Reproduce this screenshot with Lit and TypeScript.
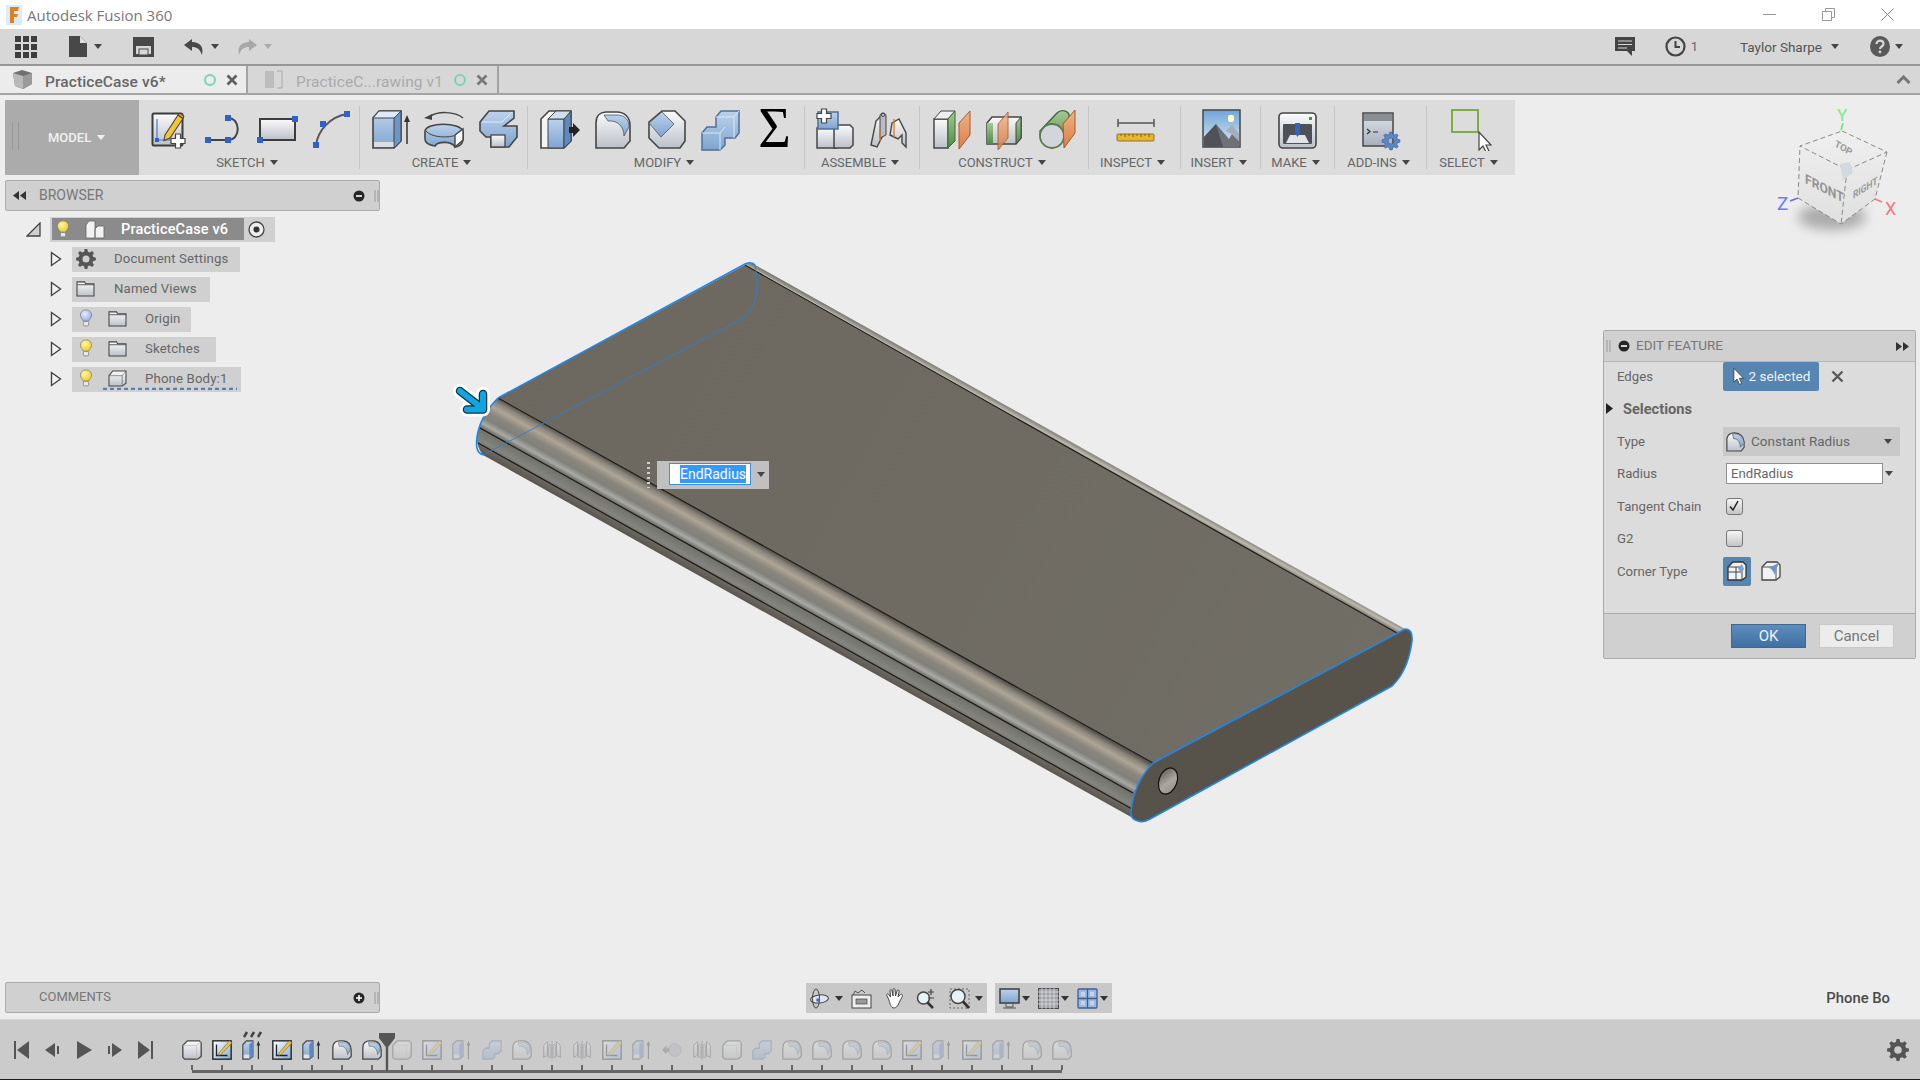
import { LitElement, html, css, svg } from "lit";
import { customElement } from "lit/decorators.js";

const S = "#454545";
const node = (x: number, y: number) => svg`<rect x=${x - 3} y=${y - 3} width="6" height="6" fill="#2f62c8"/>`;
const plusMark = (x: number, y: number) => svg`<path d="M${x - 2.5} ${y - 7}h5v4.5h4.5v5h-4.5v4.5h-5v-4.5h-4.5v-5h4.5z" fill="#fff" stroke="#444" stroke-width="1.2"/>`;

function gearPath(cx: number, cy: number, r: number, hole: number, teeth = 8) {
  let d = "";
  const step = (Math.PI * 2) / teeth;
  for (let i = 0; i < teeth; i++) {
    const a = i * step;
    const pts = [[a - step * 0.32, r * 0.76], [a - step * 0.17, r], [a + step * 0.17, r], [a + step * 0.32, r * 0.76]];
    for (const [t, rr] of pts) {
      d += `${d ? "L" : "M"}${(cx + Math.cos(t) * rr).toFixed(2)} ${(cy + Math.sin(t) * rr).toFixed(2)}`;
    }
  }
  d += `ZM${cx + hole} ${cy}a${hole} ${hole} 0 1 0 ${-2 * hole} 0a${hole} ${hole} 0 1 0 ${2 * hole} 0Z`;
  return d;
}

const tool: Record<string, any> = {
  sketchNew: svg`<rect x="5.5" y="6.5" width="30" height="32" rx="1.5" fill="url(#gWhite)" stroke="#3c3c3c" stroke-width="2"/>
    <path d="M10 12V33H28" stroke="#4d79c7" fill="none" stroke-width="1.2"/><rect x="8" y="31" width="4" height="4" fill="#2f62c8"/>
    <path d="M18 28L31 8l5 3.500-13 19.500-6 2.500z" fill="#f4c531" stroke="#444" stroke-width="1.100"/><path d="M31 8l5 3.500 1-2.500-4-3z" fill="#d98a4b" stroke="#444"/>
    ${plusMark(31, 34)}`,
  line: svg`<path d="M7 33H27C40 33 40 11 27 11" fill="none" stroke="#444" stroke-width="2"/>${node(7, 33)}${node(27, 33)}${node(27, 11)}`,
  rect: svg`<rect x="5" y="12" width="35" height="21" fill="url(#gWhite)" stroke="#3c3c3c" stroke-width="2"/>${node(40, 12)}${node(5, 33)}`,
  arc: svg`<path d="M7 38C9 24 20 10 38 7" fill="none" stroke="#555" stroke-width="2"/>${node(7, 38)}${node(14, 17)}${node(38, 7)}`,
  extrude: svg`<path d="M5 11L11 4H33V34L26 41H5Z" fill="url(#gBlue)" stroke=${S} stroke-width="1.600"/><path d="M5 11L11 4H33L26 11Z" fill="#e0eaf6" stroke=${S}/><path d="M26 11L33 4V34L26 41Z" fill="#6d95c6" stroke=${S}/><rect x="6" y="35" width="19.500" height="5" fill="#dadde3"/>
    <path d="M39 37V13" stroke="#333" stroke-width="1.500"/><path d="M36 15l3-7 3 7z" fill="#333"/>`,
  revolve: svg`<path d="M41 11C33 4 15 4 7 10" stroke="#444" fill="none" stroke-width="1.500"/><path d="M2 11l8-4v6z" fill="#444"/>
    <path d="M3 24C4 15 38 15 41 24V33C40 38 36 40 33 40C30 34 16 34 13 39C7 38 3 36 3 32Z" fill="url(#gBlue)" stroke=${S} stroke-width="1.600"/><path d="M4 24C9 31 28 31 34 28" fill="none" stroke=${S}/><path d="M33 28L41 22V33L33 40Z" fill="#fff" stroke=${S} stroke-width="1.400"/>`,
  sweep: svg`<path d="M4 15L13 4H38V11L28 19H41V30L33 40H15V30H10L4 24Z" fill="url(#gBlue)" stroke=${S} stroke-width="1.600"/><path d="M6 15H26L36 5" fill="none" stroke="#dfe9f5"/><rect x="15" y="28" width="14" height="12" fill="url(#gWhite)" stroke=${S} stroke-width="1.300"/>`,
  press: svg`<path d="M4 12L12 4H34V34L27 41H4Z" fill="#f4f4f4" stroke=${S} stroke-width="1.600"/><path d="M11 12H27V41H11Z" fill="url(#gBlue)" stroke=${S}/><path d="M27 12L34 4V34L27 41Z" fill="#5f88bd" stroke=${S}/><path d="M11 12L19 4H34L27 12Z" fill="#cfe0f2" stroke=${S}/><path d="M32 20h4v-4l7 7-7 7v-4h-4z" fill="#222"/>`,
  fillet: svg`<path d="M5 16C5 8 10 5 15 5H26C33 5 39 10 39 18V34L33 41H5Z" fill="url(#gWhite)" stroke=${S} stroke-width="1.600"/><path d="M13 8H26C34 8 38 13 38 20L33 29C33 20 27 13 17 14Z" fill="url(#gBlue)" stroke=${S} stroke-width=".7"/>`,
  chamfer: svg`<path d="M4 15L17 4H30L40 14V34L35 41H14L4 31Z" fill="url(#gWhite)" stroke=${S} stroke-width="1.600"/><path d="M4 16L17 5L29 17L16 30Z" fill="url(#gBlue)" stroke=${S} stroke-width=".7"/>`,
  combine: svg`<path d="M3 26L8 20H17V10L22 4H40V26L36 31H26V38L21 43H3Z" fill="url(#gBlue)" stroke="#4e6f98" stroke-width="1.500"/><path d="M17 10H35V31M35 10L40 4M3 26H21V43M21 26L26 20" fill="none" stroke="#dbe6f4" stroke-width="1"/>`,
  newComp: svg`<rect x="3" y="21" width="19" height="20" fill="url(#gWhite)" stroke=${S} stroke-width="1.500"/><path d="M20 21L23 18H36L39 21V38L36 41H20Z" fill="url(#gWhite)" stroke=${S} stroke-width="1.500"/><path d="M4 5H24V22H4Z" fill="url(#gBlue)" stroke="#4e6f98" stroke-width="1.500"/>${plusMark(10, 9)}`,
  joint: svg`<path d="M3 38L8 14L14 8V30L9 40Z" fill="url(#gWhite)" stroke=${S} stroke-width="1.400"/><path d="M12 9C12 5 18 5 18 9V28L12 31Z" fill="#b9bcc4" stroke=${S}/><circle cx="15" cy="8" r="1.500" fill="#fff" stroke="#333"/><path d="M24 16L31 12L38 26V40L34 36V28L30 32L22 28Z" fill="url(#gWhite)" stroke=${S} stroke-width="1.400"/><path d="M26 12V30M12 24V34" stroke="#e8751a" stroke-width="1.300"/>`,
  offset: svg`<path d="M5 12H19V41H5Z" fill="url(#gWhite)" stroke=${S} stroke-width="1.500"/><path d="M5 12L12 4H26L19 12Z" fill="#eceeef" stroke=${S}/><path d="M19 12L26 4V34L19 41Z" fill="url(#gGreen)" stroke="#3e6b35"/><path d="M30 16L41 4V28L30 42Z" fill="url(#gOrange)" stroke="#a8562a"/>`,
  mid: svg`<path d="M4 16L9 10H38V31L33 37H4Z" fill="url(#gWhite)" stroke=${S} stroke-width="1.500"/><path d="M4 16H10V37H4Z" fill="url(#gGreen)"/><path d="M33 16L38 10V31L33 37Z" fill="url(#gGreen)" stroke=${S}/><path d="M15 43V17L25 5V31Z" fill="url(#gOrange)" stroke="#a8562a" opacity=".85"/>`,
  tangent: svg`<path d="M3 24L20 6C24 2 34 3 32 12L18 40C10 42 3 34 3 24Z" fill="url(#gGreen)" stroke="#3e6b35" stroke-width="1.400"/><circle cx="15" cy="29" r="12" fill="#d3d5dc" stroke="#5a7a4f" stroke-width="1.800"/><path d="M26 17L38 3V26L27 41Z" fill="url(#gOrange)" stroke="#a8562a"/>`,
  ruler: svg`<path d="M5 16H41M5 12V20M41 12V20" stroke="#555" stroke-width="1.500" fill="none"/><rect x="4" y="27" width="37" height="7" rx="1" fill="#e9b52a" stroke="#8b7630"/><path d="M8 27v2M12 27v3M16 27v2M20 27v3M24 27v2M28 27v3M32 27v2M36 27v3" stroke="#7a5f10"/>`,
  picture: svg`<rect x="4" y="3" width="37" height="37" fill="url(#gSky)" stroke=${S} stroke-width="1.500"/><path d="M5 40V30L17 17L30 32L33 27L40 34V40Z" fill="#6e7178"/><path d="M17 17L24 40H5V30Z" fill="#4f5259"/><path d="M27 24L33 18L40 27V34L33 27Z" fill="#a5adb7"/><rect x="29" y="8" width="6" height="7" rx="2" fill="#fff7c4"/>`,
  make: svg`<rect x="3" y="6" width="37" height="35" rx="4" fill="url(#gWhite)" stroke=${S} stroke-width="1.600"/><rect x="7" y="17" width="29" height="20" rx="1" fill="#4d5158"/><path d="M10 36L14 28H29L33 36Z" fill="#e1e3e8"/><path d="M19 16H24V26L21.500 30L19 26Z" fill="#2d66c2"/><rect x="33" y="10" width="3" height="3" fill="#3c9b3c"/>`,
  addins: svg`<rect x="4" y="6" width="30" height="33" fill="url(#gPanel)" stroke=${S} stroke-width="1.500"/><rect x="5" y="7" width="28" height="7" fill="#8b8e95"/><path d="M8 22l3 2.500-3 2.500M14 25h5" stroke="#333" fill="none" stroke-width="1.200"/><path d=${gearPath(32, 34, 9, 3)} fill="#5c87c6" fill-rule="evenodd" stroke="#35598f" stroke-width=".6"/>`,
  select: svg`<rect x="3" y="3" width="26" height="22" fill="none" stroke="#76a832" stroke-width="1.800"/><path d="M30 25V43L34 39L37 45L40 44L37 38H42Z" fill="#fff" stroke="#444" stroke-width="1.200"/>`,
};

const groups = [
  { name: "SKETCH", w: 221, icons: ["sketchNew", "line", "rect", "arc"] },
  { name: "CREATE", w: 168, icons: ["extrude", "revolve", "sweep"] },
  { name: "MODIFY", w: 277, icons: ["press", "fillet", "chamfer", "combine", "sigma"] },
  { name: "ASSEMBLE", w: 115, icons: ["newComp", "joint"] },
  { name: "CONSTRUCT", w: 169, icons: ["offset", "mid", "tangent"] },
  { name: "INSPECT", w: 92, icons: ["ruler"] },
  { name: "INSERT", w: 80, icons: ["picture"] },
  { name: "MAKE", w: 74, icons: ["make"] },
  { name: "ADD-INS", w: 92, icons: ["addins"] },
  { name: "SELECT", w: 88, icons: ["select"] },
];

const tl: Record<string, any> = {
  box: svg`<path d="M2 7L7 2H20L22 4V19L18 22H4L2 20Z" fill="url(#gWhite)" stroke=${S} stroke-width="1.400"/><path d="M2 7H17V22M17 7L22 3" fill="none" stroke="#bbb" stroke-width=".8"/>`,
  sketch: svg`<rect x="2" y="2" width="20" height="20" fill="url(#gBlueSoft)" stroke="#222" stroke-width="1.500"/><path d="M6 6V18H18" fill="none" stroke="#222" stroke-width="1.400"/><path d="M9 15L20 2L23 4L11 17L8 18Z" fill="#f4c531" stroke="#555" stroke-width=".6"/>`,
  extrude: svg`<path d="M2 6L6 2H13V19L9 22H2Z" fill="url(#gBlue)" stroke=${S} stroke-width="1.200"/><path d="M9 6L13 2V19L9 22Z" fill="#5f88bd"/><rect x="3" y="17" width="6" height="4" fill="#dfe2e7"/><path d="M19 22V6" stroke="#333" stroke-width="1.300"/><path d="M17 7l2-5 2 5z" fill="#333"/>`,
  fillet: svg`<path d="M2 9C2 4 6 2 9 2H13C19 2 22 7 22 12V19L19 22H2Z" fill="url(#gWhite)" stroke=${S} stroke-width="1.400"/><path d="M8 4H14C19 4 21 8 21 12L18 17C18 11 14 7 9 8Z" fill="url(#gBlue)" stroke=${S} stroke-width=".5"/>`,
  combine: svg`<path d="M2 13L5 10H9V5L12 2H22V13L19 16H15V20L12 22H2Z" fill="url(#gBlue)" stroke="#4e6f98" stroke-width="1.200"/>`,
  joint: svg`<path d="M3 20L3 7L7 3V18ZM21 20V7L17 3V18Z" fill="url(#gWhite)" stroke=${S}/><path d="M8 8C9 4 11 6 11 8V20H8ZM13 8C13 5 16 5 16 8V20H13Z" fill="#b9bcc4" stroke=${S} stroke-width=".8"/><path d="M12 2V23" stroke="#555"/>`,
  circ: svg`<circle cx="15" cy="12" r="7" fill="#a9b0bb" stroke="#888"/><path d="M1 12L6 7V10H9V14H6V17Z" fill="#666"/>`,
};
const enabledTl = ["box", "sketch", "extrude", "sketch", "extrude", "fillet", "fillet"];
const disabledTl = ["box", "sketch", "extrude", "combine", "fillet", "joint", "joint", "sketch", "extrude", "circ", "joint", "box", "combine", "fillet", "fillet", "fillet", "fillet", "sketch", "extrude", "sketch", "extrude", "fillet", "fillet"];

const bulb = (blue = false) => svg`<svg class="i16" viewBox="0 0 16 22"><path d="M8 1C3.800 1 1.500 4 1.500 7.200C1.500 10 3.800 11.500 4.800 14H11.200C12.200 11.500 14.500 10 14.500 7.200C14.500 4 12.200 1 8 1Z" fill=${blue ? "url(#gBulbB)" : "url(#gBulbY)"} stroke="#777" stroke-width=".8"/><rect x="5" y="14.500" width="6" height="5" rx="1" fill="#e8e8e8" stroke="#777" stroke-width=".8"/></svg>`;
const triR = svg`<svg class="arrow" viewBox="0 0 12 16"><path d="M1.500 1.500L10.500 8L1.500 14.500Z" fill="#f2f2f2" stroke="#444" stroke-width="1.400"/></svg>`;
const cursor = svg`<svg class="cur" viewBox="0 0 14 20"><path d="M2 1V16L5.500 12.800L8 18.500L10.500 17.500L8 12H12.500Z" fill="#fff" stroke="#444" stroke-width="1"/></svg>`;
const hidePanel = (plus = false) => svg`<svg class="dot" viewBox="0 0 12 12"><circle cx="6" cy="6" r="5.500" fill="#262626"/><path d=${plus ? "M3 6H9M6 3V9" : "M3 6H9"} stroke="#fff" stroke-width="1.600"/></svg>`;
const grip = svg`<svg class="grip" viewBox="0 0 5 14"><path d="M1 1V13M4 1V13" stroke="#9a9a9a"/></svg>`;

@customElement("app-root")
export class AppRoot extends LitElement {
  static styles = css`
    :host { display: block; width: 1920px; height: 1080px; overflow: hidden; background: #ededed; color: #666; font-family: Roboto, "Liberation Sans", sans-serif; font-size: 13px; }
    svg { display: block; flex: none; }
    .defs { width: 0; height: 0; }
    .caret { width: 0; height: 0; border-left: 4px solid transparent; border-right: 4px solid transparent; border-top: 5px solid #444; flex: none; }
    .caret.pale { border-top-color: #aaa; }

    .title { height: 29px; background: #fff; display: flex; align-items: center; padding-left: 6px; gap: 5px; font: 15px "Open Sans", sans-serif; color: #787878; }
    .logo { width: 16px; height: 20px; }
    .winbtns { margin-left: auto; display: flex; padding-right: 26px; gap: 46px; }
    .winbtns svg { width: 13px; height: 13px; }

    .quick { height: 35px; background: #d7d7d7; border-bottom: 2px solid #979797; display: flex; align-items: center; padding-left: 15px; }
    .quick > svg, .qb { flex: none; }
    .q-grid { width: 22px; height: 22px; }
    .q-file { width: 18px; height: 21px; margin-left: 32px; }
    .q-save { width: 21px; height: 20px; margin-left: 31px; }
    .q-undo { width: 20px; height: 16px; margin-left: 30px; }
    .q-redo { width: 20px; height: 16px; margin-left: 18px; }
    .quick .caret { margin-left: 7px; }
    .qright { margin-left: auto; display: flex; align-items: center; padding-right: 17px; }
    .qcomment { width: 20px; height: 19px; }
    .qclock { width: 21px; height: 21px; margin-left: 30px; }
    .qone { margin-left: 5px; }
    .quser { margin-left: 42px; color: #555; font-size: 13.500px; }
    .quser + .caret { margin-left: 9px; }
    .qhelp { width: 20px; height: 21px; margin-left: 31px; }
    .qhelp + .caret { margin-left: 5px; }

    .tabs { height: 27px; background: #d7d7d7; border-bottom: 2px solid #a3a3a3; display: flex; align-items: stretch; box-sizing: content-box; }
    .tab { width: 248px; display: flex; align-items: center; box-sizing: border-box; padding-left: 12px; border-right: 2px solid #a3a3a3; }
    .tab.on { background: #ececec; font-weight: 500; color: #666; }
    .tab.off { width: 251px; padding-left: 15px; color: #aaa; }
    .tab svg.ti { width: 21px; height: 21px; }
    .tname { font-size: 15.500px; letter-spacing: .1px; margin: 4px 0 0 12px; width: 159px; white-space: nowrap; }
    .tab.off .tname { width: 158px; }
    .tdot { width: 8px; height: 8px; border: 2px solid #7fd0b8; border-radius: 50%; flex: none; }
    .tx { width: 12px; height: 12px; margin-left: 10px; }
    .collapse { margin-left: auto; margin-right: 9px; width: 15px; height: 9px; align-self: center; }

    .work { position: relative; height: 924px; display: flex; flex-direction: column; justify-content: space-between; }
    .canvas { position: absolute; left: 0; top: 0; width: 1920px; height: 924px; }
    .top, .bottom { position: relative; }

    .toolbar { margin: 5px 0 0 5px; height: 75px; width: 1510px; background: #dcdcdc; display: flex; }
    .model { width: 134px; background: #ababab; color: #f2f2f2; font-size: 13px; font-weight: 500; display: flex; align-items: center; gap: 6px; padding-left: 43px; box-sizing: border-box; position: relative; }
    .model .caret { border-top-color: #f2f2f2; }
    .mgrip { position: absolute; left: 7px; top: 22px; width: 7px; height: 28px; border-left: 1px solid #999; border-right: 1px solid #999; box-sizing: border-box; }
    .group { position: relative; flex: none; display: flex; flex-direction: column; align-items: center; box-sizing: border-box; }
    .group::after { content: ""; position: absolute; right: 0; top: 6px; bottom: 6px; width: 1px; background: #c6c6c6; }
    .group:last-child::after { display: none; }
    .ics { display: flex; gap: 10px; height: 48px; margin-top: 7px; }
    .ics svg { width: 44px; height: 44px; }
    .sigma { width: 44px; height: 44px; font: 56px/42px "Liberation Serif", serif; color: #000; text-align: center; overflow: visible; }
    .glabel { display: flex; align-items: center; gap: 5px; font-size: 13px; color: #666; padding-right: 5px; }

    .panel { background: #d0d0d0; border: 1px solid #aaa; border-radius: 2px; box-sizing: border-box; display: flex; align-items: center; width: 375px; height: 31px; margin-left: 5px; color: #777; }
    .browser { margin-top: 5px; padding-left: 7px; }
    .rew { width: 13px; height: 9px; }
    .browser .pname { margin-left: 13px; font-size: 14px; }
    .dot { width: 12px; height: 12px; margin-left: auto; }
    .grip { width: 5px; height: 14px; margin: 0 0 0 9px; }
    .pname { font-size: 13.500px; padding-bottom: 2px; }

    .tree { margin-top: 5px; display: flex; flex-direction: column; gap: 4px; }
    .row { display: flex; align-items: center; padding-left: 50px; height: 26px; }
    .row.root { padding-left: 26px; }
    .arrow { width: 12px; height: 16px; margin-right: 10px; }
    .rootarrow { width: 15px; height: 15px; margin-right: 9px; }
    .cell { height: 25px; background: #d0d0d0; display: flex; align-items: center; color: #666; box-sizing: border-box; font-size: 13.200px; white-space: nowrap; letter-spacing: .15px; padding-bottom: 1px; }
    .cell.root { background: #d0d0d0; width: 225px; padding-left: 2px; padding-bottom: 0; }
    .rootin { background: #8b8b8b; width: 192px; height: 22px; display: flex; align-items: center; color: #fff; font-weight: 500; font-size: 14.500px; padding-left: 4px; box-sizing: border-box; }
    .i16 { width: 14px; height: 19px; }
    .i20 { width: 19px; height: 17px; }
    .i-gear { width: 20px; height: 20px; margin-left: 4px; margin-right: 18px; }
    .i-folder-first { margin-left: 4px; margin-right: 19px; }
    .cell .i16 { margin-left: 7px; margin-right: 15px; }
    .cell .i20.second { margin-right: 18px; }
    .rootin .i16 { margin: 0 15px 0 0; }
    .rootbody { width: 20px; height: 19px; margin-right: 16px; }
    .target { width: 17px; height: 17px; margin-left: 4px; }
    .w168 { width: 168px; } .w138 { width: 138px; } .w119 { width: 119px; } .w144 { width: 144px; } .w169 { width: 169px; }
    .phone { position: relative; }
    .wave { width: 134px; height: 4px; position: absolute; left: 31px; bottom: 2px; }

    .bottom { display: flex; align-items: flex-start; }
    .comments { margin-top: -1px; padding-left: 33px; }
    .comments .pname { font-size: 13px; }
    .nav { margin-left: 426px; height: 30px; background: #c8c8c8; display: flex; align-items: center; }
    .nav1 { width: 181px; padding-left: 3px; box-sizing: border-box; }
    .nav2 { width: 117px; margin-left: 8px; padding-left: 4px; box-sizing: border-box; }
    .nav svg { width: 21px; height: 21px; }
    .nav .caret { margin: 0 0 0 5px; border-top-color: #333; }
    .nav2 .caret { margin-left: 2px; }
    .nav .g1 { margin-left: 8px; }
    .nav .g2 { margin-left: 11.500px; }
    .phonebo { margin-left: auto; margin-right: 30px; margin-top: 6px; font-size: 14.800px; font-weight: 500; color: #4a4a4a; }
    .stage { display: flex; justify-content: space-between; align-items: flex-start; padding-bottom: 6px; }

    .pop { position: absolute; left: 646px; top: 366px; display: flex; align-items: center; height: 28px; }
    .popgrip { width: 5px; height: 28px; margin-right: 6px; }
    .popbox { width: 112px; height: 28px; background: #c0c0c0; display: flex; align-items: flex-start; padding: 2px 0 0 12px; box-sizing: border-box; }
    .popin { width: 82px; height: 22px; background: #fff; border: 1px solid #3d8fe0; box-sizing: border-box; display: flex; align-items: center; padding-left: 10px; }
    .sel { background: #3399ff; color: #fff; font-size: 14px; line-height: 18px; }
    .popbox .caret { margin: 9px 0 0 6px; }

    .edit { position: absolute; left: 1603px; top: 235px; width: 313px; height: 329px; background: #dcdcdc; border: 1px solid #aaa; border-radius: 2px; box-sizing: border-box; display: flex; flex-direction: column; color: #666; font-size: 13.200px; }
    .ehead { height: 30px; background: #d0d0d0; border-bottom: 1px solid #b5b5b5; display: flex; align-items: center; padding: 0 6px 0 2px; flex: none; box-sizing: content-box; color: #777; }
    .ehead .grip { margin: 0 7px 0 0; }
    .ehead .dot { margin: 0 6px 0 0; }
    .ehead .ff { width: 13px; height: 9px; margin-left: auto; }
    .ebody { flex: 1; margin-top: -2px; padding: 0 0 0 13px; display: grid; grid-template-columns: 106px 1fr; grid-auto-rows: 32.500px; align-items: center; }
    .seltitle { grid-column: 1 / 3; font-weight: 700; display: flex; align-items: center; margin-left: -11px; gap: 10px; color: #666; font-size: 14.600px; }
    .seltri { width: 7px; height: 11px; }
    .ctl { display: flex; align-items: center; }
    .chosen { width: 96px; height: 29px; background: #5585b0; color: #f0f4f8; display: flex; align-items: center; justify-content: center; gap: 4px; border-radius: 2px; font-size: 13.500px; }
    .cur { width: 13px; height: 19px; }
    .ebx { width: 13px; height: 13px; margin-left: 12px; }
    .selbox { width: 177px; height: 29px; background: #c9c9c9; display: flex; align-items: center; padding-left: 2px; box-sizing: border-box; gap: 5px; font-size: 13.500px; }
    .selbox svg { width: 21px; height: 21px; }
    .selbox .caret { margin-left: auto; margin-right: 8px; }
    .inp { margin-left: 3px; width: 157px; height: 21px; background: #fff; border: 1px solid #8d8d8d; box-sizing: border-box; padding: 0 0 1px 4px; display: flex; align-items: center; }
    .inp + .caret { margin-left: 2px; }
    .cb { margin-left: 3px; width: 17px; height: 17px; border: 1.500px solid #777; border-radius: 3px; background: linear-gradient(#f6f6f6, #c4c4c4); box-sizing: border-box; }
    .cb svg { width: 14px; height: 14px; }
    .corner1 { width: 28px; height: 29px; background: #5585b0; border-radius: 2px; display: flex; align-items: center; justify-content: center; }
    .corner1 svg, .corner2 { width: 22px; height: 22px; }
    .corner2 { margin-left: 9px; }
    .efoot { height: 44px; background: #d0d0d0; border-top: 1px solid #aaa; flex: none; display: flex; align-items: center; justify-content: flex-end; padding-right: 21px; gap: 13px; }
    .btn { width: 75px; height: 24px; box-sizing: border-box; display: flex; align-items: center; justify-content: center; font-size: 15px; }
    .ok { background: linear-gradient(#5c8dbd, #3f70a4); color: #f2f2f2; border: 1px solid #44688c; }
    .cancel { background: #ececec; color: #777; border: 1px solid #c8c8c8; }

    .tline { height: 60px; background: #cbcbcb; border-top: 1px solid #d6d6d6; box-sizing: border-box; display: flex; position: relative; }
    .foot { height: 2px; background: #1d1d1d; }
    .transport { width: 177px; display: flex; align-items: center; padding: 0 0 0 13px; box-sizing: border-box; gap: 15.300px; margin-top: 0; height: 60px; }
    .transport svg { width: 16px; height: 18px; }
    .track { position: relative; width: 900px; padding-top: 18px; box-sizing: border-box; }
    .items { display: flex; }
    .it { width: 30px; display: flex; flex-direction: column; align-items: center; }
    .it svg { width: 22px; height: 24px; }
    .it::after { content: ""; width: 2px; height: 5px; margin-top: 3px; background: #666; }
    .it.off svg { opacity: .3; }
    .rule { margin: 0 15px; height: 3px; background: #666; }
    .marker { position: absolute; left: 202px; top: 13px; width: 16px; height: 38px; }
    .slashes { position: absolute; left: 66px; top: 11px; width: 19px; height: 7px; }
    .setg { width: 22px; height: 22px; margin-left: auto; margin-right: 11px; margin-top: 19px; }
  `;

  render() {
    return html`
      <svg class="defs" aria-hidden="true">
        <defs>
          <linearGradient id="gWhite" x1="0" y1="0" x2="0" y2="1"><stop offset="0" stop-color="#fbfbfb"/><stop offset="1" stop-color="#bcc0c9"/></linearGradient>
          <linearGradient id="gPanel" x1="0" y1="0" x2="0" y2="1"><stop offset="0" stop-color="#dfe3ec"/><stop offset="1" stop-color="#a9aebc"/></linearGradient>
          <linearGradient id="gBlue" x1="0" y1="0" x2="0" y2="1"><stop offset="0" stop-color="#bcd2ec"/><stop offset="1" stop-color="#7fa4d0"/></linearGradient>
          <linearGradient id="gBlueSoft" x1="0" y1="0" x2="1" y2="1"><stop offset="0" stop-color="#fff"/><stop offset="1" stop-color="#88aad4"/></linearGradient>
          <linearGradient id="gGreen" x1="0" y1="0" x2="0" y2="1"><stop offset="0" stop-color="#a6c894"/><stop offset="1" stop-color="#4f8a44"/></linearGradient>
          <linearGradient id="gOrange" x1="0" y1="0" x2="0" y2="1"><stop offset="0" stop-color="#f0b388"/><stop offset="1" stop-color="#d98044"/></linearGradient>
          <linearGradient id="gSky" x1="0" y1="0" x2="0" y2="1"><stop offset="0" stop-color="#6fa6d8"/><stop offset="1" stop-color="#dbe9f5"/></linearGradient>
          <radialGradient id="gBulbY" cx=".4" cy=".35" r=".7"><stop offset="0" stop-color="#fff6a8"/><stop offset="1" stop-color="#f0c820"/></radialGradient>
          <radialGradient id="gBulbB" cx=".4" cy=".35" r=".7"><stop offset="0" stop-color="#e6eeff"/><stop offset="1" stop-color="#8eaee8"/></radialGradient>
          <linearGradient id="gSide" gradientUnits="userSpaceOnUse" x1="498" y1="397" x2="470" y2="447">
            <stop offset="0" stop-color="#5a564e"/><stop offset=".08" stop-color="#8a857c"/><stop offset=".18" stop-color="#aea596"/><stop offset=".3" stop-color="#8a867d"/><stop offset=".42" stop-color="#80807a"/><stop offset=".52" stop-color="#aaaaa5"/><stop offset=".6" stop-color="#6b6a64"/><stop offset=".63" stop-color="#73736d"/><stop offset=".8" stop-color="#85857f"/><stop offset=".87" stop-color="#6b6861"/><stop offset="1" stop-color="#5a554e"/>
          </linearGradient>
          <linearGradient id="gTop" gradientUnits="userSpaceOnUse" x1="498" y1="263" x2="1405" y2="762"><stop offset="0" stop-color="#6c685f"/><stop offset="1" stop-color="#716e66"/></linearGradient>
          <linearGradient id="gFar" gradientUnits="userSpaceOnUse" x1="752" y1="263" x2="747" y2="272"><stop offset="0" stop-color="#7c7a73"/><stop offset=".5" stop-color="#bcb9af"/><stop offset="1" stop-color="#66635c"/></linearGradient>
          <linearGradient id="gHole" x1="0" y1="0" x2="1" y2="1"><stop offset="0" stop-color="#55514a"/><stop offset=".55" stop-color="#aaa8a0"/><stop offset="1" stop-color="#8d8a82"/></linearGradient>
          <linearGradient id="gCube" x1="0" y1="0" x2="0" y2="1"><stop offset="0" stop-color="#efefef"/><stop offset="1" stop-color="#e0e0e0"/></linearGradient>
          <filter id="blur6" x="-50%" y="-50%" width="200%" height="200%"><feGaussianBlur stdDeviation="6"/></filter>
        </defs>
      </svg>

      <div class="title">
        <svg class="logo" viewBox="0 0 16 20"><rect width="16" height="20" fill="#dcecf6"/><path d="M4 2H13L12 6H8V9H12L11 12H8V18H4Z" fill="#e07f22"/></svg>
        <span>Autodesk Fusion 360</span>
        <div class="winbtns">
          <svg viewBox="0 0 13 13"><path d="M0 6.500H13" stroke="#999"/></svg>
          <svg viewBox="0 0 13 13"><path d="M.5 3.500H9.500V12.500H.5ZM3.500 3.500V.5H12.500V9.500H9.500" fill="none" stroke="#999"/></svg>
          <svg viewBox="0 0 13 13"><path d="M.5 .5L12.500 12.500M12.500 .5L.5 12.500" stroke="#888"/></svg>
        </div>
      </div>

      <div class="quick">
        <svg class="q-grid" viewBox="0 0 22 22" fill="#3e3e3e"><path d="M0 0h6v6H0zM8 0h6v6H8zM16 0h6v6h-6zM0 8h6v6H0zM8 8h6v6H8zM16 8h6v6h-6zM0 16h6v6H0zM8 16h6v6H8zM16 16h6v6h-6z"/></svg>
        <svg class="q-file" viewBox="0 0 18 21"><path d="M0 0H11L18 7V21H0Z" fill="#484848"/><path d="M11 0V7H18" fill="#ddd"/></svg>
        <span class="caret"></span>
        <svg class="q-save" viewBox="0 0 21 20"><path d="M1.500 1.500H19.500V18.500H1.500Z" fill="#d7d7d7" stroke="#484848" stroke-width="3"/><rect x="3" y="1" width="15" height="8" fill="#484848"/><rect x="6" y="12" width="9" height="6" fill="#d7d7d7" stroke="#484848"/></svg>
        <svg class="q-undo" viewBox="0 0 20 16"><path d="M8 0L0 6L8 12V8C13 8 16 10 18 16C20 8 16 3 8 3Z" fill="#484848"/></svg>
        <span class="caret"></span>
        <svg class="q-redo" viewBox="0 0 20 16"><path d="M12 0L20 6L12 12V8C7 8 4 10 2 16C0 8 4 3 12 3Z" fill="#a8a8a8"/></svg>
        <span class="caret pale"></span>
        <div class="qright">
          <svg class="qcomment" viewBox="0 0 20 19"><path d="M0 0H20V14H17V19L12 14H0Z" fill="#444"/><path d="M3 4H17M3 7.500H17M3 11H12" stroke="#d7d7d7" stroke-width="1.200"/></svg>
          <svg class="qclock" viewBox="0 0 21 21"><circle cx="10.500" cy="10.500" r="9" fill="none" stroke="#444" stroke-width="2.200"/><path d="M10.500 5V11H15" fill="none" stroke="#444" stroke-width="2"/></svg>
          <span class="qone">1</span>
          <span class="quser">Taylor Sharpe</span><span class="caret"></span>
          <svg class="qhelp" viewBox="0 0 20 21"><ellipse cx="10" cy="10.500" rx="10" ry="10.500" fill="#5a5a5a"/><path d="M6.500 8C6.500 3.500 13.500 3.500 13.500 8C13.500 10.500 10 10.500 10 13" fill="none" stroke="#d7d7d7" stroke-width="2.200"/><circle cx="10" cy="16" r="1.400" fill="#d7d7d7"/></svg>
          <span class="caret"></span>
        </div>
      </div>

      <div class="tabs">
        <div class="tab on">
          <svg class="ti" viewBox="0 0 21 21"><path d="M1 4L10 1L20 4V15L11 20L3 17Z" fill="#707070"/><path d="M11 7L20 4V15L11 20Z" fill="#9a9a9a"/><path d="M1 4L11 7V20L3 17Z" fill="#b9b9b9"/></svg>
          <span class="tname">PracticeCase v6*</span>
          <span class="tdot"></span>
          <svg class="tx" viewBox="0 0 12 12"><path d="M1.500 1.500L10.500 10.500M10.500 1.500L1.500 10.500" stroke="#5f5f5f" stroke-width="2.600"/></svg>
        </div>
        <div class="tab off">
          <svg class="ti" viewBox="0 0 21 21"><path d="M2 2L11 2V19H2Z" fill="#bdbdbd"/><path d="M14 2H19V19H14" fill="none" stroke="#aaa"/></svg>
          <span class="tname">PracticeC...rawing v1</span>
          <span class="tdot"></span>
          <svg class="tx" viewBox="0 0 12 12"><path d="M1.500 1.500L10.500 10.500M10.500 1.500L1.500 10.500" stroke="#777" stroke-width="2.600"/></svg>
        </div>
        <svg class="collapse" viewBox="0 0 15 9"><path d="M1.500 8L7.500 2L13.500 8" fill="none" stroke="#777" stroke-width="3"/></svg>
      </div>

      <div class="work">
        ${this.canvas()}
        <div class="top">
          <div class="toolbar">
            <div class="model"><span class="mgrip"></span>MODEL<span class="caret"></span></div>
            ${groups.map(g => html`
              <div class="group" style="width:${g.w}px">
                <div class="ics">
                  ${g.icons.map(i => i === "sigma" ? html`<div class="sigma">Σ</div>` : html`<svg viewBox="0 0 44 44">${tool[i]}</svg>`)}
                </div>
                <div class="glabel">${g.name}<span class="caret"></span></div>
              </div>`)}
          </div>
          <div class="panel browser">
            <svg class="rew" viewBox="0 0 13 9"><path d="M6 0V9L0 4.500ZM13 0V9L7 4.500Z" fill="#333"/></svg>
            <span class="pname">BROWSER</span>
            ${hidePanel()}${grip}
          </div>
          ${this.tree()}
        </div>
        <div class="bottom stage">
          <div class="panel comments"><span class="pname">COMMENTS</span>${hidePanel(true)}${grip}</div>
          ${this.navbar()}
          <div class="phonebo">Phone Bo</div>
        </div>
        <div class="pop">
          <svg class="popgrip" viewBox="0 0 5 28"><path d="M2.500 1V27" stroke="#cfcfcf" stroke-width="3" stroke-dasharray="2 3"/></svg>
          <div class="popbox">
            <div class="popin"><span class="sel">EndRadius</span></div>
            <span class="caret"></span>
          </div>
        </div>
        ${this.editPanel()}
      </div>

      ${this.timeline()}
      <div class="foot"></div>
    `;
  }

  tree() {
    return html`<div class="tree">
      <div class="row root">
        <svg class="rootarrow" viewBox="0 0 15 15"><path d="M14 1V14H1Z" fill="#d0d0d0" stroke="#444" stroke-width="1.300"/></svg>
        <div class="cell root">
          <div class="rootin">
            ${bulb()}
            <svg class="rootbody" viewBox="0 0 20 19"><path d="M1 5L4 1H10V18H1Z M10 9L13 6H19V18H10Z" fill="#f2f2f2" stroke="#666" stroke-width=".8"/></svg>
            <span>PracticeCase v6</span>
          </div>
          <svg class="target" viewBox="0 0 17 17"><circle cx="8.500" cy="8.500" r="7.500" fill="#eee" stroke="#444" stroke-width="1.300"/><circle cx="8.500" cy="8.500" r="3" fill="#333"/></svg>
        </div>
      </div>
      <div class="row">${triR}<div class="cell w168">
        <svg class="i-gear" viewBox="0 0 20 20"><path d=${gearPath(10, 10, 10, 3.5)} fill="#555" fill-rule="evenodd"/></svg>Document Settings</div></div>
      <div class="row">${triR}<div class="cell w138">
        <svg class="i20 i-folder-first" viewBox="0 0 20 18"><path d="M1 2H9L10 4H19V17H1Z" fill="url(#gWhite)" stroke="#444" stroke-width="1.100"/><path d="M1 5H19" stroke="#444" stroke-width=".9"/></svg>Named Views</div></div>
      <div class="row">${triR}<div class="cell w119">${bulb(true)}${this.f2()}Origin</div></div>
      <div class="row">${triR}<div class="cell w144">${bulb()}${this.f2()}Sketches</div></div>
      <div class="row">${triR}<div class="cell w169 phone">${bulb()}
        <svg class="i20 second" viewBox="0 0 20 18"><path d="M1 6L5 1H19V14L15 17H1Z" fill="url(#gWhite)" stroke="#444" stroke-width="1.100"/><path d="M1 6H15V17M15 6L19 1" fill="none" stroke="#666" stroke-width=".7"/></svg>Phone Body:1
        <svg class="wave" viewBox="0 0 134 4"><path d="M0 3L134 3" stroke="#5b7fb5" stroke-width="2.500" stroke-dasharray="4 3"/></svg></div></div>
    </div>`;
  }

  f2() {
    return svg`<svg class="i20 second" viewBox="0 0 20 18"><path d="M1 2H9L10 4H19V17H1Z" fill="url(#gWhite)" stroke="#444" stroke-width="1.100"/><path d="M1 5H19" stroke="#444" stroke-width=".9"/></svg>`;
  }

  navbar() {
    return html`<div class="nav nav1">
        <svg viewBox="0 0 21 21"><ellipse cx="10.500" cy="11" rx="9" ry="4" fill="#dfe6f2" stroke="#444" transform="rotate(-6 10 11)"/><ellipse cx="7" cy="10.500" rx="3.500" ry="9.500" fill="none" stroke="#444"/><circle cx="9" cy="12" r="1.800" fill="#2f72d0"/></svg>
        <span class="caret"></span>
        <svg class="g1" viewBox="0 0 21 21"><rect x="1" y="7" width="19" height="13" fill="#eee" stroke="#444"/><rect x="5" y="11" width="11" height="5" fill="#999" stroke="#444" stroke-width=".7"/><path d="M2 7L4 3L7 5L11 2L14 5" fill="none" stroke="#555"/></svg>
        <svg class="g2" viewBox="0 0 21 21"><path d="M5 12L3 8C2 6 4 5 5 7L6.500 9L6 3C6 1 8 1 8 3L9 8V2C9 0 11 0 11 2L11.500 8L13 3C13.500 1 15.500 2 15 4L14 9L16 7C18 5 19 7 18 9L15 15C14 18 12 20 10 20C7 20 6 16 5 12Z" fill="#fff" stroke="#444"/></svg>
        <svg class="g2" viewBox="0 0 21 21"><circle cx="7.500" cy="10" r="6" fill="#e6f2f6" stroke="#444" stroke-width="1.500"/><path d="M11.500 14.500L17 20" stroke="#333" stroke-width="2.500"/><path d="M15 1V7M12 4H18M12 10H18" stroke="#444" stroke-width="1.200"/></svg>
        <svg class="g2" viewBox="0 0 21 21"><rect x="1" y="1" width="19" height="19" fill="none" stroke="#666" stroke-dasharray="2 2"/><circle cx="9" cy="8.500" r="7" fill="#e6f2f6" stroke="#444" stroke-width="1.500"/><path d="M14 13.500L20 20" stroke="#333" stroke-width="2.800"/></svg>
        <span class="caret"></span>
      </div>
      <div class="nav nav2">
        <svg viewBox="0 0 21 21"><rect x="1" y="1" width="19" height="14" fill="url(#gBlue)" stroke="#444" stroke-width="1.600"/><path d="M7 16V19H14V16M4 20H17" stroke="#555" fill="none"/></svg>
        <span class="caret"></span>
        <svg class="g1" viewBox="0 0 21 21"><rect x=".5" y=".5" width="20" height="20" fill="#9fa1a9" stroke="#4a4a4a"/><path d="M4 0V21M8 0V21M12 0V21M16 0V21M0 4H21M0 8H21M0 12H21M0 16H21" stroke="#e4e4e4" stroke-width=".7"/></svg>
        <span class="caret"></span>
        <svg class="g1" viewBox="0 0 21 21"><rect x="1" y="1" width="19" height="19" rx="1" fill="#9db9df" stroke="#3f5e90" stroke-width="1.300"/><path d="M10.500 1V20M1 10.500H20" stroke="#3f5e90" stroke-width="1.300"/><rect x="4" y="4" width="4" height="4" fill="#c3d5ec"/><rect x="13" y="4" width="4" height="4" fill="#c3d5ec"/><rect x="4" y="13" width="4" height="4" fill="#c3d5ec"/><rect x="13" y="13" width="4" height="4" fill="#c3d5ec"/></svg>
        <span class="caret"></span>
      </div>`;
  }

  editPanel() {
    return html`<div class="edit">
      <div class="ehead">${grip}${hidePanel()}<span class="pname">EDIT FEATURE</span>
        <svg class="ff" viewBox="0 0 13 9"><path d="M0 0V9L6 4.500ZM7 0V9L13 4.500Z" fill="#333"/></svg></div>
      <div class="ebody">
        <span>Edges</span>
        <div class="ctl"><div class="chosen">${cursor}<span>2 selected</span></div>
          <svg class="ebx" viewBox="0 0 13 13"><path d="M1.500 1.500L11.500 11.500M11.500 1.500L1.500 11.500" stroke="#5a5a5a" stroke-width="2.400"/></svg></div>
        <div class="seltitle"><svg class="seltri" viewBox="0 0 7 11"><path d="M0 0L7 5.500L0 11Z" fill="#222"/></svg>Selections</div>
        <span>Type</span>
        <div class="ctl"><div class="selbox">
          <svg viewBox="0 0 22 22"><path d="M2 8C3 3 6 2 10 2C16 2 20 6 20 12V17L17 21H2Z" fill="url(#gWhite)" stroke="#444" stroke-width="1.200"/><path d="M8 3C14 2 20 6 20 13L16 17C16 11 13 8 9 8Z" fill="url(#gBlue)" stroke="#444" stroke-width=".6"/></svg>
          <span>Constant Radius</span><span class="caret"></span></div></div>
        <span>Radius</span>
        <div class="ctl"><div class="inp">EndRadius</div><span class="caret"></span></div>
        <span>Tangent Chain</span>
        <div class="ctl"><div class="cb"><svg viewBox="0 0 14 14"><path d="M3 7.500L6 11L11 2" fill="none" stroke="#222" stroke-width="1.500"/></svg></div></div>
        <span>G2</span>
        <div class="ctl"><div class="cb"></div></div>
        <span>Corner Type</span>
        <div class="ctl">
          <div class="corner1"><svg viewBox="0 0 22 22"><path d="M2 7L7 2H17L20 5V17L16 20H2Z" fill="#f2f2f2" stroke="#333" stroke-width="1.300"/><path d="M2 12H16M2 7H16M10 7V20M16 7V20" fill="none" stroke="#444"/><path d="M12 8L16 4L18 9L15 14Z" fill="#7fa4d0"/></svg></div>
          <svg class="corner2" viewBox="0 0 22 22"><path d="M2 7L7 2H17L20 5V17L16 20H2Z" fill="#f2f2f2" stroke="#444" stroke-width="1.300"/><path d="M2 7H16V20" fill="none" stroke="#555"/><path d="M8 7C12 7 14 5 19 3C17 8 15 10 15 15C13 10 11 9 8 7Z" fill="#6f92c8"/></svg>
        </div>
      </div>
      <div class="efoot"><div class="btn ok">OK</div><div class="btn cancel">Cancel</div></div>
    </div>`;
  }

  timeline() {
    return html`<div class="tline">
      <div class="transport">
        <svg viewBox="0 0 16 18"><path d="M1 0H3V18H1ZM16 0V18L4 9Z" fill="#555"/></svg>
        <svg viewBox="0 0 16 18"><path d="M11 2V16L1 9ZM13 5H15V13H13Z" fill="#555"/></svg>
        <svg viewBox="0 0 16 18"><path d="M1 0L16 9L1 18Z" fill="#555"/></svg>
        <svg viewBox="0 0 16 18"><path d="M5 2V16L15 9ZM1 5H3V13H1Z" fill="#555"/></svg>
        <svg viewBox="0 0 16 18"><path d="M0 0V18L12 9ZM13 0H15V18H13Z" fill="#555"/></svg>
      </div>
      <div class="track">
        <svg class="slashes" viewBox="0 0 19 7"><path d="M1 6L4 1M8 6L11 1M15 6L18 1" stroke="#444" stroke-width="2.500"/></svg>
        <div class="items">
          ${enabledTl.map(t => html`<div class="it"><svg viewBox="0 0 24 24">${tl[t]}</svg></div>`)}
          ${disabledTl.map(t => html`<div class="it off"><svg viewBox="0 0 24 24">${tl[t]}</svg></div>`)}
        </div>
        <div class="rule"></div>
        <svg class="marker" viewBox="0 0 16 38"><path d="M0 0H16V5L9.200 14V38H6.800V14L0 5Z" fill="#555"/></svg>
      </div>
      <svg class="setg" viewBox="0 0 22 22"><path d=${gearPath(11, 11, 11, 3.800)} fill="#555" fill-rule="evenodd"/></svg>
    </div>`;
  }

  canvas() {
    return html`<svg class="canvas" viewBox="0 94 1920 924">
      <path d="M498 397L1153 762Q1135 785 1131 810L1140 821L483 454Q476 445 477 436Q480 415 498 397Z" fill="url(#gSide)"/>
      <path d="M745 263Q752 260 757 265L1405 628L1397 632Z" fill="url(#gFar)"/>
      <path d="M745 264L1397 632L1153 762L498 397Z" fill="url(#gTop)"/>
      <path d="M1153 762L1405 628Q1413 628 1412 640Q1408 670 1392 685L1150 818Q1143 822 1138 820Q1130 818 1131 810Q1134 782 1153 762Z" fill="#57534b"/>
      <path d="M745 264L1397 632M498 397L1153 762M480 427L1133 792M478 442L1132 808" stroke="#1d1b18" stroke-width="1.200" fill="none"/>
      <ellipse cx="1168" cy="780" rx="9" ry="13.500" transform="rotate(20 1168 780)" fill="url(#gHole)" stroke="#111" stroke-width="1.200"/>
      <path d="M483 454L742 318Q757 308 757 285Q757 272 755 265" fill="none" stroke="#2b7fd0" stroke-width="1" opacity=".9"/>
      <path d="M498 397L745 263Q752 260 755 264M498 397Q480 415 477 436Q476 445 477 447Q478 452 483 454" fill="none" stroke="#1e86e8" stroke-width="1.600"/>
      <path d="M1153 762L1405 628Q1413 628 1412 640Q1408 670 1392 685L1150 818Q1143 822 1138 820Q1130 818 1131 810Q1134 782 1153 762" fill="none" stroke="#1e86e8" stroke-width="1.600"/>

      <g stroke-linejoin="round" stroke-linecap="round" fill="none">
        <path d="M460 390L482 407M483 393V408.500H467" stroke="#fff" stroke-width="14"/>
        <path d="M460 390L482 407M483 393V408.500H467" stroke="#0a3347" stroke-width="8.500"/>
        <path d="M460 390L482 407M483 393V408.500H467" stroke="#12a6e0" stroke-width="6"/>
      </g>

      <ellipse cx="1832" cy="216" rx="34" ry="13" fill="#777" opacity=".55" filter="url(#blur6)"/>
      <path d="M1842 130L1887 151L1875 198L1841 223L1798 197L1800 145Z" fill="url(#gCube)"/>
      <path d="M1842 130L1887 151L1847 169L1800 145ZM1847 169L1841 223M1887 151L1875 198L1841 223L1798 197L1800 145" fill="none" stroke="#8a8a8a" stroke-dasharray="5 3"/>
      <path d="M1840 163L1850 161L1853 172L1843 179Z" fill="#d4d9e0"/>
      <path d="M1841 129L1843 122" stroke="#7fe07f" stroke-width="1.800"/>
      <path d="M1798 197L1790 200" stroke="#6a6af0" stroke-width="1.800"/>
      <path d="M1875 198L1882 201" stroke="#ef7a7a" stroke-width="1.800"/>
      <g font-family="Roboto, sans-serif">
        <text x="1837" y="120" font-size="17" fill="#84e884">Y</text>
        <text x="1777" y="209" font-size="19" fill="#6f7bf2">Z</text>
        <text x="1885" y="214" font-size="18" fill="#f07a7a">X</text>
        <text transform="matrix(.86 .5 -.35 .85 1834 145)" font-size="10" font-weight="700" fill="#999">TOP</text>
        <text transform="matrix(.9 .46 0 1 1805 182)" font-size="13.500" font-weight="700" fill="#949494">FRONT</text>
        <text transform="matrix(.8 -.5 0 1 1853 198)" font-size="10.500" font-weight="700" fill="#999">RIGHT</text>
      </g>
    </svg>`;
  }
}
